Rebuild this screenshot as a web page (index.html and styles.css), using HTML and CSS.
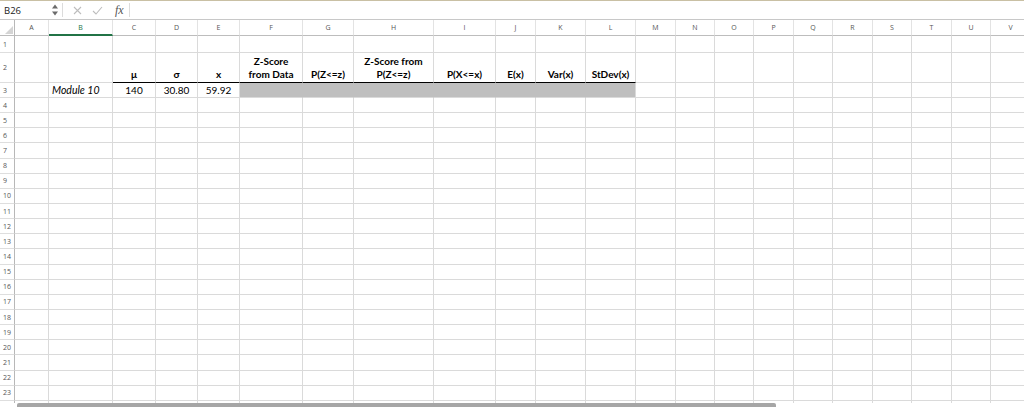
FILE: index.html
```html
<!DOCTYPE html>
<html>
<head>
<meta charset="utf-8">
<link rel="stylesheet" href="styles.css">
</head>
<body>
<div class="fbar">
  <div class="namebox">B26</div>
  <svg class="spin" width="6" height="14" viewBox="0 0 6 14"><path d="M0 5.5L3 1.5L6 5.5Z" fill="#6b6b6b"/><path d="M0 8.5L3 12.5L6 8.5Z" fill="#6b6b6b"/></svg>
  <div class="sep"></div>
  <svg class="ico" width="9" height="9" viewBox="0 0 9 9"><path d="M1 1L8 8M8 1L1 8" stroke="#bdbdbd" stroke-width="1.1" fill="none"/></svg>
  <svg class="ico ok" width="11" height="9" viewBox="0 0 11 9"><path d="M1 5L4 8L10 1" stroke="#bdbdbd" stroke-width="1.1" fill="none"/></svg>
  <div class="fx">fx</div>
  <div class="sep"></div>
</div>
<div class="sheet">
  <div class="row hdr"><div class="corner"><svg width="8" height="8" viewBox="0 0 8 8"><path d="M8 0V8H0Z" fill="#d4d4d4"/></svg></div><div>A</div><div class="sel">B</div><div>C</div><div>D</div><div>E</div><div>F</div><div>G</div><div>H</div><div>I</div><div>J</div><div>K</div><div>L</div><div>M</div><div>N</div><div>O</div><div>P</div><div>Q</div><div>R</div><div>S</div><div>T</div><div>U</div><div>V</div></div>
  <div class="row r1"><div class="rh">1</div><div></div><div></div><div></div><div></div><div></div><div></div><div></div><div></div><div></div><div></div><div></div><div></div><div></div><div></div><div></div><div></div><div></div><div></div><div></div><div></div><div></div><div></div></div>
  <div class="row r2"><div class="rh">2</div><div></div><div></div><div class="h">μ</div><div class="h">σ</div><div class="h">x</div><div class="h">Z-Score<br>from Data</div><div class="h">P(Z&lt;=z)</div><div class="h">Z-Score from<br>P(Z&lt;=z)</div><div class="h">P(X&lt;=x)</div><div class="h">E(x)</div><div class="h">Var(x)</div><div class="h">StDev(x)</div><div></div><div></div><div></div><div></div><div></div><div></div><div></div><div></div><div></div><div></div></div>
  <div class="row r3"><div class="rh">3</div><div></div><div class="txt">Module 10</div><div class="num">140</div><div class="num">30.80</div><div class="num">59.92</div><div class="fill"></div><div class="fill"></div><div class="fill"></div><div class="fill"></div><div class="fill"></div><div class="fill"></div><div class="fill last"></div><div></div><div></div><div></div><div></div><div></div><div></div><div></div><div></div><div></div><div></div></div>
  <div class="row"><div class="rh">4</div><div></div><div></div><div></div><div></div><div></div><div></div><div></div><div></div><div></div><div></div><div></div><div></div><div></div><div></div><div></div><div></div><div></div><div></div><div></div><div></div><div></div><div></div></div>
  <div class="row"><div class="rh">5</div><div></div><div></div><div></div><div></div><div></div><div></div><div></div><div></div><div></div><div></div><div></div><div></div><div></div><div></div><div></div><div></div><div></div><div></div><div></div><div></div><div></div><div></div></div>
  <div class="row"><div class="rh">6</div><div></div><div></div><div></div><div></div><div></div><div></div><div></div><div></div><div></div><div></div><div></div><div></div><div></div><div></div><div></div><div></div><div></div><div></div><div></div><div></div><div></div><div></div></div>
  <div class="row"><div class="rh">7</div><div></div><div></div><div></div><div></div><div></div><div></div><div></div><div></div><div></div><div></div><div></div><div></div><div></div><div></div><div></div><div></div><div></div><div></div><div></div><div></div><div></div><div></div></div>
  <div class="row"><div class="rh">8</div><div></div><div></div><div></div><div></div><div></div><div></div><div></div><div></div><div></div><div></div><div></div><div></div><div></div><div></div><div></div><div></div><div></div><div></div><div></div><div></div><div></div><div></div></div>
  <div class="row"><div class="rh">9</div><div></div><div></div><div></div><div></div><div></div><div></div><div></div><div></div><div></div><div></div><div></div><div></div><div></div><div></div><div></div><div></div><div></div><div></div><div></div><div></div><div></div><div></div></div>
  <div class="row"><div class="rh">10</div><div></div><div></div><div></div><div></div><div></div><div></div><div></div><div></div><div></div><div></div><div></div><div></div><div></div><div></div><div></div><div></div><div></div><div></div><div></div><div></div><div></div><div></div></div>
  <div class="row"><div class="rh">11</div><div></div><div></div><div></div><div></div><div></div><div></div><div></div><div></div><div></div><div></div><div></div><div></div><div></div><div></div><div></div><div></div><div></div><div></div><div></div><div></div><div></div><div></div></div>
  <div class="row"><div class="rh">12</div><div></div><div></div><div></div><div></div><div></div><div></div><div></div><div></div><div></div><div></div><div></div><div></div><div></div><div></div><div></div><div></div><div></div><div></div><div></div><div></div><div></div><div></div></div>
  <div class="row"><div class="rh">13</div><div></div><div></div><div></div><div></div><div></div><div></div><div></div><div></div><div></div><div></div><div></div><div></div><div></div><div></div><div></div><div></div><div></div><div></div><div></div><div></div><div></div><div></div></div>
  <div class="row"><div class="rh">14</div><div></div><div></div><div></div><div></div><div></div><div></div><div></div><div></div><div></div><div></div><div></div><div></div><div></div><div></div><div></div><div></div><div></div><div></div><div></div><div></div><div></div><div></div></div>
  <div class="row"><div class="rh">15</div><div></div><div></div><div></div><div></div><div></div><div></div><div></div><div></div><div></div><div></div><div></div><div></div><div></div><div></div><div></div><div></div><div></div><div></div><div></div><div></div><div></div><div></div></div>
  <div class="row"><div class="rh">16</div><div></div><div></div><div></div><div></div><div></div><div></div><div></div><div></div><div></div><div></div><div></div><div></div><div></div><div></div><div></div><div></div><div></div><div></div><div></div><div></div><div></div><div></div></div>
  <div class="row"><div class="rh">17</div><div></div><div></div><div></div><div></div><div></div><div></div><div></div><div></div><div></div><div></div><div></div><div></div><div></div><div></div><div></div><div></div><div></div><div></div><div></div><div></div><div></div><div></div></div>
  <div class="row"><div class="rh">18</div><div></div><div></div><div></div><div></div><div></div><div></div><div></div><div></div><div></div><div></div><div></div><div></div><div></div><div></div><div></div><div></div><div></div><div></div><div></div><div></div><div></div><div></div></div>
  <div class="row"><div class="rh">19</div><div></div><div></div><div></div><div></div><div></div><div></div><div></div><div></div><div></div><div></div><div></div><div></div><div></div><div></div><div></div><div></div><div></div><div></div><div></div><div></div><div></div><div></div></div>
  <div class="row"><div class="rh">20</div><div></div><div></div><div></div><div></div><div></div><div></div><div></div><div></div><div></div><div></div><div></div><div></div><div></div><div></div><div></div><div></div><div></div><div></div><div></div><div></div><div></div><div></div></div>
  <div class="row"><div class="rh">21</div><div></div><div></div><div></div><div></div><div></div><div></div><div></div><div></div><div></div><div></div><div></div><div></div><div></div><div></div><div></div><div></div><div></div><div></div><div></div><div></div><div></div><div></div></div>
  <div class="row"><div class="rh">22</div><div></div><div></div><div></div><div></div><div></div><div></div><div></div><div></div><div></div><div></div><div></div><div></div><div></div><div></div><div></div><div></div><div></div><div></div><div></div><div></div><div></div><div></div></div>
  <div class="row"><div class="rh">23</div><div></div><div></div><div></div><div></div><div></div><div></div><div></div><div></div><div></div><div></div><div></div><div></div><div></div><div></div><div></div><div></div><div></div><div></div><div></div><div></div><div></div><div></div></div>
  <div class="row"><div class="rh"></div><div></div><div></div><div></div><div></div><div></div><div></div><div></div><div></div><div></div><div></div><div></div><div></div><div></div><div></div><div></div><div></div><div></div><div></div><div></div><div></div><div></div><div></div></div>
</div>
<div class="hscroll"></div>
</body>
</html>
```

FILE: styles.css
```css
* { box-sizing: border-box; }
html, body { margin: 0; padding: 0; }
body {
  width: 1024px;
  height: 407px;
  overflow: hidden;
  background: #fff;
  position: relative;
  font-family: Lato, "Open Sans", "Liberation Sans", sans-serif;
  color: #000;
}
.fbar {
  height: 20px;
  border-top: 1px solid #c9c0a4;
  border-bottom: 1px solid #c8c8c8;
  display: flex;
  align-items: center;
}
.namebox {
  width: 52px;
  padding-left: 4px;
  font-size: 9.5px;
  color: #222;
  font-family: "Open Sans", sans-serif;
}
.spin { margin-right: 4px; }
.sep { width: 1px; height: 14px; background: #dcdcdc; }
.ico { margin-left: 10px; }
.ico.ok { margin-left: 10px; }
.fx {
  margin-left: 12px;
  width: 12px;
  font-family: "Liberation Serif", serif;
  font-style: italic;
  font-size: 12px;
  color: #555;
  margin-right: 2px;
}
.sheet { height: 383px; overflow: hidden; }
.row {
  display: grid;
  grid-template-columns: 15px 34px 64px 43px 42px 42px 63px 51px 80px 62px 40px 50px 50px 40px 39px 39px 40px 39px 40px 39px 40px 39px 40px;
  width: 1031px;
  height: 15.15px;
}
.row > div {
  border-right: 1px solid #dadada;
  border-bottom: 1px solid #dadada;
  min-width: 0;
}
.row > .rh {
  border-right: 1px solid #b8b8b8;
  border-bottom: 1px solid #dedede;
  font-size: 7px;
  color: #555;
  padding-left: 3px;
  display: flex;
  align-items: center;
  font-family: "Open Sans", sans-serif;
}
.hdr { height: 16px; }
.hdr > div {
  border-right: 1px solid #e3e3e3;
  border-bottom: 1px solid #bdbdbd;
  font-size: 7px;
  color: #555;
  display: flex;
  align-items: center;
  justify-content: center;
  font-family: "Open Sans", sans-serif;
}
.hdr > .corner {
  border-right: 1px solid #b8b8b8;
  align-items: flex-end;
  justify-content: flex-end;
  padding: 0 1px 1px 0;
}
.hdr > .sel {
  color: #217346;
  border-bottom: 2px solid #217346;
  padding-top: 1px;
}
.r1 { height: 17px; }
.r2 { height: 30px; }
.r3 { height: 15px; }
.row > .h {
  font-weight: bold;
  font-size: 10px;
  line-height: 13px;
  text-align: center;
  display: flex;
  flex-direction: column;
  justify-content: flex-end;
  padding-bottom: 1px;
  border-bottom: 1px solid #000;
  white-space: nowrap;
}
.row > .txt {
  font-style: italic;
  font-size: 10.5px;
  padding-left: 3px;
  display: flex;
  align-items: flex-end;
  line-height: 13px;
}
.row > .num {
  font-size: 10px;
  display: flex;
  align-items: flex-end;
  justify-content: center;
  line-height: 13px;
}
.row > .fill {
  background: #bfbfbf;
  border-right-color: #bfbfbf;
}
.row > .fill.last { border-right-color: #dadada; }
.hscroll {
  position: absolute;
  left: 17px;
  top: 403px;
  width: 759px;
  height: 6px;
  background: #a6a6a6;
  border-radius: 2px;
}
```
